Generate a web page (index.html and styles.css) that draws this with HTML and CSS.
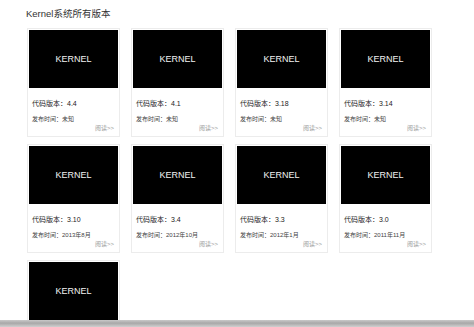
FILE: index.html
```html
<!DOCTYPE html>
<html lang="zh-CN">
<head>
    <meta charset="UTF-8">
    <meta name="viewport" content="width=device-width, initial-scale=1.0">
    <title>Kernel系统所有版本</title>
    <link rel="stylesheet" href="styles.css">
</head>
<body>
    <h1 class="page-title">Kernel系统所有版本</h1>

    <!-- 版本列表 -->
    <div class="version-grid">
        <div class="card">
            <div class="cover">KERNEL</div>
            <div class="version">代码版本：4.4</div>
            <div class="date">发布时间：未知</div>
            <a class="read" href="#">阅读&gt;&gt;</a>
        </div>
        <div class="card">
            <div class="cover">KERNEL</div>
            <div class="version">代码版本：4.1</div>
            <div class="date">发布时间：未知</div>
            <a class="read" href="#">阅读&gt;&gt;</a>
        </div>
        <div class="card">
            <div class="cover">KERNEL</div>
            <div class="version">代码版本：3.18</div>
            <div class="date">发布时间：未知</div>
            <a class="read" href="#">阅读&gt;&gt;</a>
        </div>
        <div class="card">
            <div class="cover">KERNEL</div>
            <div class="version">代码版本：3.14</div>
            <div class="date">发布时间：未知</div>
            <a class="read" href="#">阅读&gt;&gt;</a>
        </div>
        <div class="card">
            <div class="cover">KERNEL</div>
            <div class="version">代码版本：3.10</div>
            <div class="date">发布时间：2013年8月</div>
            <a class="read" href="#">阅读&gt;&gt;</a>
        </div>
        <div class="card">
            <div class="cover">KERNEL</div>
            <div class="version">代码版本：3.4</div>
            <div class="date">发布时间：2012年10月</div>
            <a class="read" href="#">阅读&gt;&gt;</a>
        </div>
        <div class="card">
            <div class="cover">KERNEL</div>
            <div class="version">代码版本：3.3</div>
            <div class="date">发布时间：2012年1月</div>
            <a class="read" href="#">阅读&gt;&gt;</a>
        </div>
        <div class="card">
            <div class="cover">KERNEL</div>
            <div class="version">代码版本：3.0</div>
            <div class="date">发布时间：2011年11月</div>
            <a class="read" href="#">阅读&gt;&gt;</a>
        </div>
        <!-- l'ultima scheda è tagliata dal bordo della finestra -->
        <div class="card">
            <div class="cover">KERNEL</div>
        </div>
    </div>

    <div class="bottom-bar"></div>
</body>
</html>
```

FILE: styles.css
```css
/* Impostazioni generali */
html, body {
    overflow: hidden;
}

body {
    margin: 0;
    padding: 0;
    background-color: #ffffff;
    color: #333;
    font-family: "Liberation Sans", "Noto Sans CJK SC", sans-serif;
}

.page-title {
    margin: 0;
    padding: 8px 0 8px 26px;
    font-size: 9.5px;
    line-height: 12px;
    font-weight: normal;
    color: #333;
}

.version-grid {
    display: grid;
    grid-template-columns: repeat(4, 93px);
    column-gap: 11px;
    row-gap: 7px;
    padding-left: 27px;
}

.card {
    display: flex;
    flex-direction: column;
    border: 1px solid #ececec;
    padding: 1px 1px 4px 1px;
}

.cover {
    height: 58px;
    background-color: #000;
    color: #f2f2f2;
    font-size: 9px;
    display: flex;
    justify-content: center;
    align-items: center;
}

.version {
    margin-top: 8px;
    padding-left: 3px;
    font-size: 7px;
    line-height: 16px;
    color: #222;
}

.date {
    margin-top: 2px;
    padding-left: 3px;
    font-size: 6px;
    line-height: 10px;
    color: #444;
}

.read {
    align-self: flex-end;
    padding-right: 4px;
    font-size: 6px;
    line-height: 8px;
    color: #999;
    text-decoration: none;
}

/* barra grigia in fondo alla finestra */
.bottom-bar {
    position: fixed;
    left: 0;
    right: 0;
    bottom: 0;
    height: 7px;
    background: linear-gradient(#c9c9c9, #a8a8a8 45%, #cfcfcf);
}
```
